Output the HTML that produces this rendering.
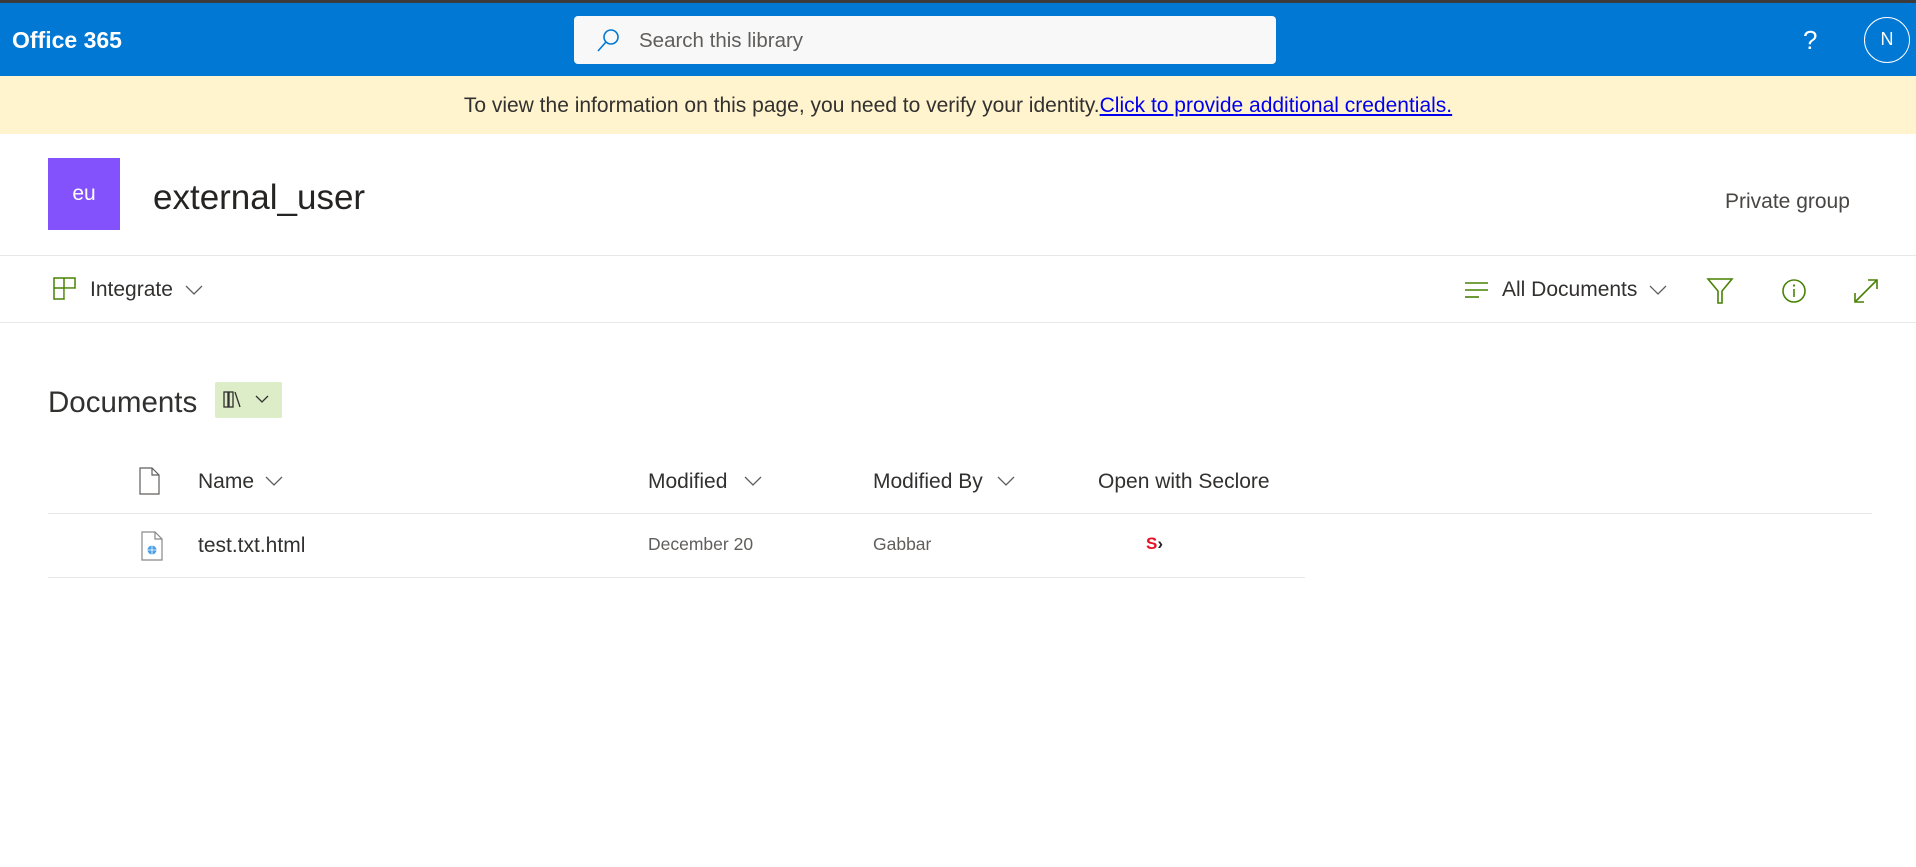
<!DOCTYPE html>
<html><head><style>
*{margin:0;padding:0;box-sizing:border-box}
body{width:1916px;height:867px;background:#fff;font-family:"Liberation Sans",sans-serif;color:#323130;position:relative;overflow:hidden}
.a{position:absolute;white-space:nowrap}
</style></head><body>
<div class="a" style="left:0;top:0;width:1916px;height:3px;background:#3b3b3b"></div>
<div class="a" style="left:0;top:3px;width:1916px;height:73px;background:#0078d4"></div>
<div class="a" style="left:12px;top:27px;color:#fff;font-weight:bold;font-size:23px">Office 365</div>
<div class="a" style="left:574px;top:16px;width:702px;height:48px;background:#f8f8f8;border-radius:4px"></div>
<svg class="a" style="left:594px;top:27px" width="28" height="28" viewBox="0 0 28 28"><circle cx="17" cy="10" r="7" fill="none" stroke="#0078d4" stroke-width="1.6"/><line x1="12" y1="15" x2="4" y2="24" stroke="#0078d4" stroke-width="1.6"/></svg>
<div class="a" style="left:639px;top:29px;font-size:20.5px;color:#605e5c">Search this library</div>
<div class="a" style="left:1803px;top:25px;font-size:26px;color:#fff">?</div>
<div class="a" style="left:1864px;top:17px;width:46px;height:46px;border:1.5px solid #fff;border-radius:50%;color:#fff;font-size:18px;text-align:center;line-height:43px">N</div>
<div class="a" style="left:0;top:76px;width:1916px;height:58px;background:#fff4ce"></div>
<div class="a" style="left:0;top:94px;width:1916px;text-align:center;font-size:21px;color:#323130">To view the information on this page, you need to verify your identity.<span style="color:#0000ee;text-decoration:underline">Click to provide additional credentials.</span></div>
<div class="a" style="left:48px;top:158px;width:72px;height:72px;background:#8352fc;color:#fff;font-size:21px;text-align:center;line-height:72px">eu</div>
<div class="a" style="left:153px;top:178px;font-size:35px;color:#252423">external_user</div>
<div class="a" style="left:1725px;top:190px;font-size:21px;color:#484644">Private group</div>
<div class="a" style="left:0;top:255px;width:1916px;height:1px;background:#e8e8e8"></div>
<svg class="a" style="left:53px;top:277px" width="24" height="24" viewBox="0 0 24 24"><rect x="1" y="1" width="21" height="21" fill="none" stroke="#498205" stroke-width="1.5"/><line x1="11" y1="1" x2="11" y2="22" stroke="#498205" stroke-width="1.5"/><line x1="1" y1="11" x2="22" y2="11" stroke="#498205" stroke-width="1.5"/><rect x="11.8" y="11.8" width="12" height="12" fill="#fff"/></svg>
<div class="a" style="left:90px;top:278px;font-size:21px">Integrate</div>
<svg class="a" style="left:184px;top:283px" width="20" height="14"><polyline points="2,3 10,11 18,3" fill="none" stroke="#605e5c" stroke-width="1.3"/></svg>
<svg class="a" style="left:1464px;top:280px" width="26" height="22"><g stroke="#498205" stroke-width="1.6"><line x1="1" y1="3" x2="24" y2="3"/><line x1="1" y1="10" x2="24" y2="10"/><line x1="1" y1="17" x2="15" y2="17"/></g></svg>
<div class="a" style="left:1502px;top:278px;font-size:21px">All Documents</div>
<svg class="a" style="left:1648px;top:283px" width="20" height="14"><polyline points="2,3 10,11 18,3" fill="none" stroke="#605e5c" stroke-width="1.3"/></svg>
<svg class="a" style="left:1706px;top:277px" width="28" height="28" viewBox="0 0 28 28"><path d="M2 2H26L16 14V26H12V14Z" fill="none" stroke="#498205" stroke-width="1.6"/></svg>
<svg class="a" style="left:1780px;top:277px" width="28" height="28" viewBox="0 0 28 28"><circle cx="14" cy="14" r="11" fill="none" stroke="#498205" stroke-width="1.6"/><line x1="14" y1="12" x2="14" y2="20" stroke="#498205" stroke-width="1.6"/><circle cx="14" cy="8.5" r="1.1" fill="#498205"/></svg>
<svg class="a" style="left:1852px;top:277px" width="28" height="28" viewBox="0 0 28 28"><g fill="none" stroke="#498205" stroke-width="1.6"><line x1="3" y1="25" x2="25" y2="3"/><polyline points="16,3 25,3 25,12"/><polyline points="3,16 3,25 12,25"/></g></svg>
<div class="a" style="left:0;top:322px;width:1916px;height:1px;background:#e8e8e8"></div>
<div class="a" style="left:48px;top:386px;font-size:29.5px;color:#323130">Documents</div>
<div class="a" style="left:215px;top:382px;width:67px;height:36px;background:#dcedc8;border-radius:2px"></div>
<svg class="a" style="left:223px;top:390px" width="54" height="20"><g fill="none" stroke="#323130" stroke-width="1.3"><rect x="1" y="2" width="4" height="15"/><rect x="6" y="2" width="4" height="15"/><line x1="12" y1="2" x2="17" y2="17"/><polyline points="33,6 39,12 45,6"/></g></svg>
<svg class="a" style="left:138px;top:467px" width="22" height="28" viewBox="0 0 22 28"><path d="M2 1H14L21 8V27H2Z M14 1V8H21" fill="none" stroke="#605e5c" stroke-width="1.2"/></svg>
<div class="a" style="left:198px;top:470px;font-size:21px">Name</div>
<svg class="a" style="left:264px;top:474px" width="20" height="14"><polyline points="2,3 10,11 18,3" fill="none" stroke="#605e5c" stroke-width="1.3"/></svg>
<div class="a" style="left:648px;top:470px;font-size:21px">Modified</div>
<svg class="a" style="left:743px;top:474px" width="20" height="14"><polyline points="2,3 10,11 18,3" fill="none" stroke="#605e5c" stroke-width="1.3"/></svg>
<div class="a" style="left:873px;top:470px;font-size:21px">Modified By</div>
<svg class="a" style="left:996px;top:474px" width="20" height="14"><polyline points="2,3 10,11 18,3" fill="none" stroke="#605e5c" stroke-width="1.3"/></svg>
<div class="a" style="left:1098px;top:470px;font-size:21px">Open with Seclore</div>
<div class="a" style="left:48px;top:513px;width:1824px;height:1px;background:#e8e8e8"></div>
<svg class="a" style="left:140px;top:531px" width="24" height="30" viewBox="0 0 24 30"><path d="M2 1H15L22 8V29H2Z M15 1V8H22" fill="none" stroke="#8a8886" stroke-width="1.2"/><circle cx="12" cy="19" r="4.5" fill="#4a9ee8"/><path d="M7.5 19H16.5M12 14.5V23.5" stroke="#fff" stroke-width="0.8"/></svg>
<div class="a" style="left:198px;top:534px;font-size:21px">test.txt.html</div>
<div class="a" style="left:648px;top:534px;font-size:17.5px;color:#605e5c">December 20</div>
<div class="a" style="left:873px;top:534px;font-size:17.5px;color:#605e5c">Gabbar</div>
<div class="a" style="left:1146px;top:534px;font-size:17px;font-weight:bold;color:#e00"><span style="color:#e81123">S</span><span style="color:#222">›</span></div>
<div class="a" style="left:48px;top:577px;width:1257px;height:1px;background:#e8e8e8"></div>
</body></html>
